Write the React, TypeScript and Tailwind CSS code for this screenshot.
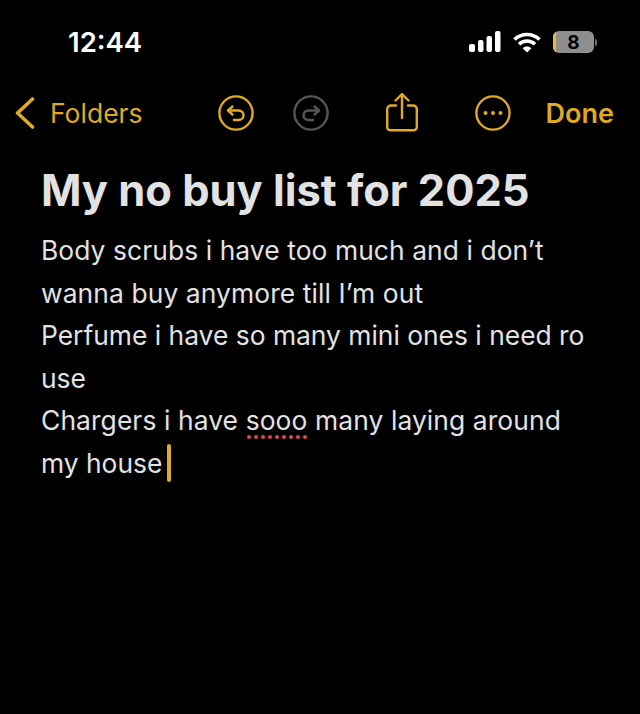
import React from "react";

const gold = "#dfa923";

function Signal() {
  return (
    <svg width="32" height="22" viewBox="0 0 32 22" fill="#fff">
      <rect x="0" y="13" width="6" height="8" rx="2" />
      <rect x="9" y="9" width="5.5" height="12" rx="2" />
      <rect x="17.5" y="5" width="5.5" height="16" rx="2" />
      <rect x="26" y="0" width="5.5" height="21" rx="2" />
    </svg>
  );
}

function Wifi() {
  return (
    <svg width="28" height="21" viewBox="0 0 28 21" fill="none" stroke="#fff" strokeWidth="3.6">
      <path d="M1.5 7.5C8.5 0.8 19.5 0.8 26.5 7.5" />
      <path d="M6 12.2C10.5 8 17.5 8 22 12.2" />
      <path d="M14 20.5L9.6 16.2C12 14 16 14 18.4 16.2Z" fill="#fff" stroke="none" />
    </svg>
  );
}

function Battery() {
  return (
    <div className="flex items-center gap-px">
      <div className="relative flex h-[22px] w-[41px] items-center justify-center overflow-hidden rounded-[6px] bg-[#8e8e8e]">
        <div className="absolute left-0 top-0 h-full w-[3px] bg-[#e8b930]" />
        <span className="text-[19px] font-bold leading-none text-black">8</span>
      </div>
      <div className="h-[7px] w-[2px] rounded-r-sm bg-[#6f6f6f]" />
    </div>
  );
}

function Undo({ color }: { color: string }) {
  return (
    <svg width="36" height="36" viewBox="0 0 36 36" fill="none" stroke={color} strokeWidth="2.4" strokeLinecap="round" strokeLinejoin="round">
      <circle cx="18" cy="18" r="16.6" />
      <path d="M14.5 11.5L10 15.5L14.5 19.5" />
      <path d="M10.5 15.5H20.5C23.5 15.5 25.5 17.7 25.5 20.2C25.5 22.8 23.5 25 20.5 25H16" />
    </svg>
  );
}

function Redo({ color }: { color: string }) {
  return (
    <svg width="36" height="36" viewBox="0 0 36 36" fill="none" stroke={color} strokeWidth="2.4" strokeLinecap="round" strokeLinejoin="round">
      <circle cx="18" cy="18" r="16.6" />
      <path d="M21.5 11.5L26 15.5L21.5 19.5" />
      <path d="M25.5 15.5H15.5C12.5 15.5 10.5 17.7 10.5 20.2C10.5 22.8 12.5 25 15.5 25H20" />
    </svg>
  );
}

function Share() {
  return (
    <svg width="32" height="39" viewBox="0 0 32 39" fill="none" stroke={gold} strokeWidth="2.4" strokeLinecap="round" strokeLinejoin="round">
      <path d="M10 12.5H5C2.8 12.5 1.2 14 1.2 16.2V33.5C1.2 35.8 2.8 37.3 5 37.3H27C29.2 37.3 30.8 35.8 30.8 33.5V16.2C30.8 14 29.2 12.5 27 12.5H22" />
      <path d="M16 25V1.5" />
      <path d="M9.5 7.5L16 1.2L22.5 7.5" />
    </svg>
  );
}

function More() {
  return (
    <svg width="36" height="36" viewBox="0 0 36 36" fill="none" stroke={gold} strokeWidth="2.4">
      <circle cx="18" cy="18" r="16.6" />
      <circle cx="10.5" cy="18" r="2" fill={gold} stroke="none" />
      <circle cx="18" cy="18" r="2" fill={gold} stroke="none" />
      <circle cx="25.5" cy="18" r="2" fill={gold} stroke="none" />
    </svg>
  );
}

const dots = [0, 1, 2, 3, 4, 5, 6, 7, 8];

export default function App() {
  return (
    <div className="h-[714px] w-[640px] overflow-hidden bg-black font-['Inter',sans-serif]">
      <div className="flex h-[83px] items-start justify-between pl-[68px] pr-[43px] pt-[26px]">
        <span className="text-[27.5px] font-semibold leading-[32px] text-white">12:44</span>
        <div className="flex items-center gap-[12px] pt-[5px]">
          <Signal />
          <Wifi />
          <Battery />
        </div>
      </div>

      <div className="flex h-[60px] items-center pl-[15px] pr-[26px]">
        <svg width="20" height="32" viewBox="0 0 20 32" fill="none" stroke={gold} strokeWidth="3.6" strokeLinecap="round" strokeLinejoin="round">
          <path d="M17.5 2L2.5 16L17.5 30" />
        </svg>
        <span className="ml-[15px] text-[26.5px] leading-none text-[#dfa923]">Folders</span>
        <div className="ml-[75px] flex items-center">
          <Undo color={gold} />
        </div>
        <div className="ml-[39px] flex items-center">
          <Redo color="#555555" />
        </div>
        <div className="mb-[2px] ml-[57px] flex items-center">
          <Share />
        </div>
        <div className="ml-[57px] flex items-center">
          <More />
        </div>
        <span className="ml-auto text-[27px] font-semibold leading-none text-[#dfa923]">Done</span>
      </div>

      <div className="pl-[41px] pt-[16px]">
        <h1 className="text-[43.4px] font-bold leading-[62px] text-[#e2e2e2]">My no buy list for 2025</h1>
        <div className="mt-[8px] text-[26.4px] leading-[42.5px] text-[#e2e2e2]">
          <p className="tracking-[0.08px]">Body scrubs i have too much and i don’t</p>
          <p className="tracking-[0.1px]">wanna buy anymore till I’m out</p>
          <p>Perfume i have so many mini ones i need ro</p>
          <p>use</p>
          <p className="tracking-[0.1px]">
            Chargers i have{" "}
            <span className="relative">
              sooo
              <span className="absolute -bottom-[3px] left-[1px] flex gap-[3px]">
                {dots.map((d) => (
                  <span key={d} className="h-[4px] w-[4px] rounded-full bg-[#e0474c]" />
                ))}
              </span>
            </span>{" "}
            many laying around
          </p>
          <p className="flex items-center">
            my house
            <span className="ml-[5px] h-[38px] w-[4px] rounded-full bg-[#dfa923]" />
          </p>
        </div>
      </div>
    </div>
  );
}
